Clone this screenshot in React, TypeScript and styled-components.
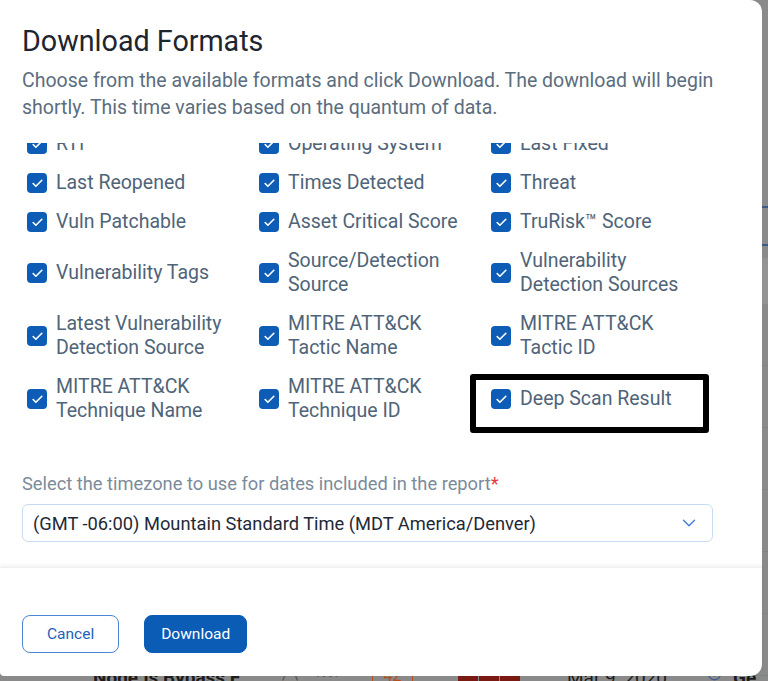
import React, { useLayoutEffect, useRef } from "react";
import styled, { createGlobalStyle } from "styled-components";
import { Check, ChevronDown, Info } from "lucide-react";

const GlobalStyle = createGlobalStyle`
  html, body {
    margin: 0;
    padding: 0;
  }
  body {
    font-family: Roboto, "Liberation Sans", sans-serif;
    background: #8a8a8a;
    overflow: hidden;
  }
  * {
    box-sizing: border-box;
  }
`;

/* ---------- dimmed page behind the dialog ---------- */

const Backdrop = styled.div`
  min-height: 100vh;
  padding-top: 206px;
  background: #8a8a8a;
`;

const TabBar = styled.div`
  height: 40px;
  border-top: 2px solid #3a5a8c;
  border-bottom: 2px solid #3a5a8c;
`;

const TableHead = styled.div`
  height: 46px;
  margin-top: 12px;
  background: #939393;
`;

const TableRow = styled.div`
  display: flex;
  align-items: center;
  height: 62px;
  padding-left: 93px;
  border-bottom: 1px solid #828282;
  font-size: 19px;
  color: #1c1c1c;
`;

const LastRow = styled(TableRow)`
  align-items: flex-start;
  padding-top: 52px;
`;

const Cell = styled.span<{ $w: number }>`
  flex: none;
  width: ${({ $w }) => $w}px;
  display: flex;
  align-items: center;
`;

const Name = styled(Cell)`
  font-weight: 700;
`;

const Faint = styled(Cell)`
  color: #555;
  font-size: 15px;
`;

const ScoreBox = styled.span`
  width: 41px;
  height: 22px;
  border-left: 1px solid #b4501c;
  border-right: 1px solid #b4501c;
  color: #b4501c;
  font-size: 16px;
  text-align: center;
`;

const RedBlock = styled.span`
  width: 20px;
  height: 22px;
  margin-right: 1px;
  background: #7a1a12;
`;

/* ---------- dialog ---------- */

const Modal = styled.div`
  position: absolute;
  top: 0;
  left: 0;
  width: 762px;
  height: 676px;
  display: flex;
  flex-direction: column;
  background: #ffffff;
  border-radius: 0 12px 12px 4px;
`;

const Body = styled.div`
  padding: 24px 30px 0 22px;
  height: 567px;
`;

const Title = styled.h2`
  margin: 0 0 9px;
  font-size: 28.7px;
  line-height: 34px;
  font-weight: 400;
  color: #1d2530;
`;

const Description = styled.p`
  margin: 0;
  font-size: 19.5px;
  line-height: 27px;
  color: #5b6d7e;
`;

const ScrollArea = styled.div`
  margin-top: 22px;
  height: 300px;
  overflow-y: auto;
  scrollbar-width: none;
  &::-webkit-scrollbar {
    display: none;
  }
`;

const FormatGrid = styled.div`
  display: grid;
  grid-template-columns: repeat(3, 212px);
  column-gap: 20px;
  row-gap: 15px;
  padding: 0 0 20px 5px;
`;

const Option = styled.label`
  position: relative;
  display: flex;
  align-items: center;
  gap: 9px;
`;

const Box = styled.span`
  flex: none;
  width: 20px;
  height: 20px;
  border-radius: 4px;
  background: #0d5cb6;
  display: flex;
  align-items: center;
  justify-content: center;
  color: #ffffff;
`;

const OptionText = styled.span`
  font-size: 19.5px;
  line-height: 24px;
  color: #4f6479;
`;

const Highlight = styled.span`
  position: absolute;
  left: -21px;
  top: -1px;
  width: 239px;
  height: 59px;
  border: 6px solid #000000;
  border-radius: 3px;
  pointer-events: none;
`;

const FieldLabel = styled.div`
  margin-top: 29px;
  font-size: 18.3px;
  line-height: 24px;
  color: #7c8b9a;
`;

const Required = styled.span`
  color: #e53935;
`;

const Select = styled.div`
  margin: 8px 19px 0 0;
  height: 38px;
  display: flex;
  align-items: center;
  justify-content: space-between;
  padding: 0 10px;
  border: 1px solid #c8dbf0;
  border-radius: 6px;
  font-size: 18.3px;
  color: #1f2a36;
`;

const Chevron = styled.span`
  display: flex;
  color: #3d7fd6;
  margin-right: 2px;
`;

const Footer = styled.div`
  flex: 1;
  display: flex;
  align-items: flex-start;
  gap: 25px;
  padding: 47px 22px 0;
  border-top: 1px solid #eef0f3;
  box-shadow: 0 -2px 3px rgba(0, 0, 0, 0.05);
`;

const Button = styled.button<{ $primary?: boolean }>`
  height: 38px;
  padding: 0 ${({ $primary }) => ($primary ? "16px" : "24px")};
  border-radius: 8px;
  font-family: inherit;
  font-size: 15.5px;
  cursor: pointer;
  border: 1.5px solid ${({ $primary }) => ($primary ? "#0b5cb5" : "#4a88d4")};
  background: ${({ $primary }) => ($primary ? "#0b5cb5" : "#ffffff")};
  color: ${({ $primary }) => ($primary ? "#ffffff" : "#1e63b8")};
`;

const formats: string[] = [
  "RTI",
  "Operating System",
  "Last Fixed",
  "Last Reopened",
  "Times Detected",
  "Threat",
  "Vuln Patchable",
  "Asset Critical Score",
  "TruRisk™ Score",
  "Vulnerability Tags",
  "Source/Detection Source",
  "Vulnerability Detection Sources",
  "Latest Vulnerability Detection Source",
  "MITRE ATT&CK Tactic Name",
  "MITRE ATT&CK Tactic ID",
  "MITRE ATT&CK Technique Name",
  "MITRE ATT&CK Technique ID",
  "Deep Scan Result",
];

export default function App() {
  const scrollRef = useRef<HTMLDivElement>(null);

  useLayoutEffect(() => {
    if (scrollRef.current) scrollRef.current.scrollTop = 12;
  }, []);

  return (
    <>
      <GlobalStyle />
      <Backdrop>
        <TabBar />
        <TableHead />
        {[1, 2, 3, 4, 5].map((i) => (
          <TableRow key={i} />
        ))}
        <LastRow>
          <Name $w={189}>Node.js Bypass F...</Name>
          <Faint $w={35}>/ \</Faint>
          <Faint $w={55}>ᴬᴬᴬ</Faint>
          <Cell $w={86}>
            <ScoreBox>42</ScoreBox>
          </Cell>
          <Cell $w={109}>
            <RedBlock />
            <RedBlock />
            <RedBlock />
          </Cell>
          <Cell $w={140}>Mar 9, 2020 00...</Cell>
          <Cell $w={26}>
            <Info size={15} color="#3a5a8c" />
          </Cell>
          <Name $w={40}>Ge</Name>
        </LastRow>
      </Backdrop>

      <Modal>
        <Body>
          <Title>Download Formats</Title>
          <Description>
            Choose from the available formats and click Download. The download
            will begin shortly. This time varies based on the quantum of data.
          </Description>

          <ScrollArea ref={scrollRef}>
            <FormatGrid>
              {formats.map((f) => (
                <Option key={f}>
                  <Box>
                    <Check size={13} strokeWidth={3} />
                  </Box>
                  <OptionText>{f}</OptionText>
                  {f === "Deep Scan Result" && <Highlight />}
                </Option>
              ))}
            </FormatGrid>
          </ScrollArea>

          <FieldLabel>
            Select the timezone to use for dates included in the report
            <Required>*</Required>
          </FieldLabel>
          <Select>
            <span>(GMT -06:00) Mountain Standard Time (MDT America/Denver)</span>
            <Chevron>
              <ChevronDown size={22} strokeWidth={1.5} />
            </Chevron>
          </Select>
        </Body>

        <Footer>
          <Button>Cancel</Button>
          <Button $primary>Download</Button>
        </Footer>
      </Modal>
    </>
  );
}
